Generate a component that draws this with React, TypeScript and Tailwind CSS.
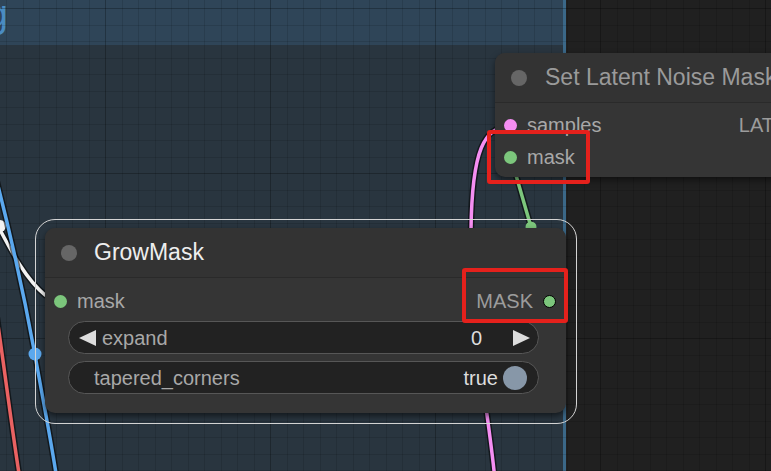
import React from "react";

const GREEN = "#7cc67c";
const PINK = "#f58ef2";

const Dot = ({ color, outline }: { color: string; outline?: boolean }) => (
  <span
    className={`block w-[13px] h-[13px] shrink-0 rounded-full ${outline ? "border border-black" : ""}`}
    style={{ backgroundColor: color }}
  />
);

function Grid() {
  const step = 16.5;
  const vs = Array.from({ length: 60 }, (_, i) => ({ k: i - 40, x: 600 + (i - 40) * step })).filter(
    (l) => l.x > -2 && l.x < 775
  );
  const hs = Array.from({ length: 32 }, (_, i) => ({ k: i - 20, y: 338 + (i - 20) * step })).filter(
    (l) => l.y > -2 && l.y < 475
  );
  return (
    <svg className="absolute inset-0 w-[771px] h-[471px] pointer-events-none" width={771} height={471}>
      {vs.map((l) => (
        <line
          key={"v" + l.k}
          x1={Math.round(l.x) + 0.5}
          x2={Math.round(l.x) + 0.5}
          y1={0}
          y2={471}
          stroke={l.k % 10 === 0 ? "rgba(0,0,0,0.26)" : "rgba(0,0,0,0.11)"}
          strokeWidth={1}
        />
      ))}
      {hs.map((l) => (
        <line
          key={"h" + l.k}
          y1={Math.round(l.y) + 0.5}
          y2={Math.round(l.y) + 0.5}
          x1={0}
          x2={771}
          stroke={l.k % 10 === 0 ? "rgba(0,0,0,0.26)" : "rgba(0,0,0,0.11)"}
          strokeWidth={1}
        />
      ))}
    </svg>
  );
}

function Link({ d, color }: { d: string; color: string }) {
  return (
    <g fill="none" strokeLinecap="round">
      <path d={d} stroke="rgba(0,0,0,0.55)" strokeWidth={6.5} />
      <path d={d} stroke={color} strokeWidth={3.5} />
    </g>
  );
}

function Links() {
  return (
    <svg className="absolute inset-0 w-[771px] h-[471px] pointer-events-none" width={771} height={471}>
      <Link d="M -8 215 C 6 240, 22 276, 45 295 L 61 302" color="#f2f2f2" />
      <circle cx={0} cy={226} r={6} fill="#f2f2f2" />
      <Link d="M -4 178 C 12 240, 25 300, 35 355 C 43 400, 51 440, 57 480" color="#5ba8ee" />
      <circle cx={35} cy={354} r={6.5} fill="#5ba8ee" />
      <Link d="M -3 318 C 6 380, 12 430, 20 480" color="#ea6262" />
      <Link d="M 511 126 C 484 126, 472 150, 471 230 C 470 330, 486 390, 495 480" color={PINK} />
      <Link d="M 511 158 L 531 227" color="#7cc67c" />
      <circle cx={531} cy={227} r={5.5} fill="#7cc67c" />
    </svg>
  );
}

function GrowMask() {
  return (
    <div className="absolute left-[35px] top-[219px] w-[542px] h-[205px] rounded-[20px] border border-[#d4d4d4] pl-[9px] pt-[8px]">
      <div className="w-[521px] h-[185px] rounded-[10px] bg-[#353535] shadow-[0_3px_6px_rgba(0,0,0,0.55)] flex flex-col">
        <div className="h-[50px] shrink-0 flex items-center pl-[16px] gap-[17px] rounded-t-[10px] bg-[#333333] border-b border-[#2a2a2a]">
          <span className="block w-4 h-4 rounded-full bg-[#666666]" />
          <span className="text-[23px] leading-none text-[#eeeeee]">GrowMask</span>
        </div>
        <div className="flex flex-col pt-[6px]">
          <div className="h-[34px] flex items-center justify-between pl-[9px] pr-[10px]">
            <div className="flex items-center gap-[10px]">
              <Dot color={GREEN} />
              <span className="text-[20px] leading-none text-[#a8a8a8]">mask</span>
            </div>
            <div className="flex items-center gap-[10px]">
              <span className="text-[20px] leading-none text-[#9c9c9c]">MASK</span>
              <Dot color={GREEN} outline />
            </div>
          </div>
          <div className="ml-[23px] mt-[3px] w-[471px] h-[33px] rounded-full border border-[#575757] bg-[#222222] flex items-center pl-[10px] pr-[8px]">
            <svg width="17" height="16" viewBox="0 0 17 16">
              <polygon points="0,8 17,0 17,16" fill="#dddddd" />
            </svg>
            <span className="ml-[6px] text-[20px] leading-none text-[#a8a8a8]">expand</span>
            <span className="ml-auto text-[20px] leading-none text-[#dddddd]">0</span>
            <svg className="ml-[31px]" width="17" height="16" viewBox="0 0 17 16">
              <polygon points="17,8 0,0 0,16" fill="#dddddd" />
            </svg>
          </div>
          <div className="ml-[23px] mt-[7px] w-[471px] h-[33px] rounded-full border border-[#575757] bg-[#222222] flex items-center pl-[25px] pr-[11px]">
            <span className="text-[20px] leading-none text-[#a8a8a8]">tapered_corners</span>
            <span className="ml-auto text-[20px] leading-none text-[#dddddd]">true</span>
            <span className="ml-[5px] block w-6 h-6 rounded-full bg-[#8797a8]" />
          </div>
        </div>
      </div>
    </div>
  );
}

function SetLatentNoiseMask() {
  return (
    <div className="absolute left-[495px] top-[53px] w-[352px] h-[124px] rounded-[10px] bg-[#353535] shadow-[0_3px_6px_rgba(0,0,0,0.5)] flex flex-col">
      <div className="h-[50px] shrink-0 flex items-center pl-[16px] gap-[18px] rounded-t-[10px] bg-[#333333] border-b border-[#2a2a2a]">
        <span className="block w-4 h-4 rounded-full bg-[#666666]" />
        <span className="text-[23px] leading-none text-[#9a9a9a] whitespace-nowrap">Set Latent Noise Mask</span>
      </div>
      <div className="flex flex-col pt-[6px]">
        <div className="h-[32px] flex items-center justify-between pl-[9px] pr-[10px]">
          <div className="flex items-center gap-[10px]">
            <Dot color={PINK} />
            <span className="text-[20px] leading-none text-[#a8a8a8]">samples</span>
          </div>
          <div className="flex items-center gap-[10px]">
            <span className="text-[20px] leading-none text-[#9c9c9c]">LATENT</span>
            <Dot color={PINK} outline />
          </div>
        </div>
        <div className="h-[32px] flex items-center pl-[9px] gap-[10px]">
          <Dot color={GREEN} />
          <span className="text-[20px] leading-none text-[#a8a8a8]">mask</span>
        </div>
      </div>
    </div>
  );
}

export default function App() {
  return (
    <div className="relative w-[771px] h-[471px] overflow-hidden bg-[#202020] font-['Liberation_Sans',Arial,sans-serif]">
      <div className="absolute left-0 top-0 w-[566px] h-[480px] flex flex-col border-r-[3px] border-[#3b6888] bg-[#29353f]">
        <div className="relative h-[45px] shrink-0 bg-[#2f4558]">
          <span className="absolute right-[555px] top-[-5px] text-[38px] leading-none text-[#4a8cc2] whitespace-nowrap">
            Inpainting
          </span>
        </div>
      </div>
      <Grid />
      <Links />
      <SetLatentNoiseMask />
      <GrowMask />
      <div className="absolute left-[487px] top-[130px] w-[103px] h-[54px] rounded-[3px] border-[4px] border-[#e5211c]" />
      <div className="absolute left-[462px] top-[268px] w-[106px] h-[55px] rounded-[3px] border-[4px] border-[#e5211c]" />
    </div>
  );
}
